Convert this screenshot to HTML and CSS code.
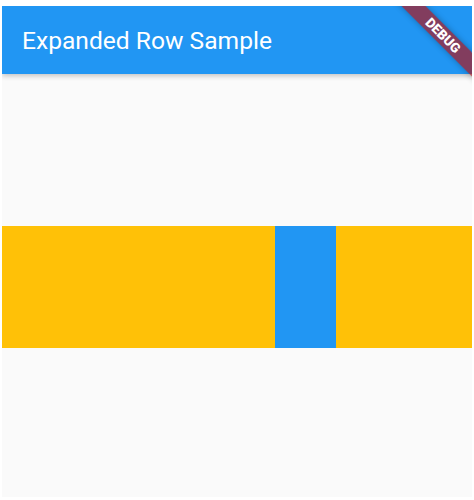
FILE: index.html
```html
<!DOCTYPE html>
<html>
<head>
<meta charset="utf-8">
<link rel="stylesheet" href="styles.css">
</head>
<body>
<div class="frame">
  <div class="app">
    <header class="appbar">
      <h1 class="title">Expanded Row Sample</h1>
    </header>
    <main class="content">
      <div class="row">
        <div class="cell amber grow2"></div>
        <div class="cell blue fixed"></div>
        <div class="cell amber grow1"></div>
      </div>
    </main>
    <div class="banner">
      <div class="ribbon">DEBUG</div>
    </div>
  </div>
</div>
</body>
</html>
```
FILE: styles.css
```css
html, body {
  margin: 0;
  padding: 0;
  background: #ffffff;
}
.frame {
  padding: 6px 2px 3px 2px;
}
.app {
  position: relative;
  width: 470px;
  height: 491px;
  background: #fafafa;
  display: flex;
  flex-direction: column;
  overflow: hidden;
  font-family: Roboto, "Liberation Sans", sans-serif;
}
.appbar {
  height: 68px;
  flex: 0 0 68px;
  background: #2196f3;
  display: flex;
  align-items: center;
  padding-left: 20px;
  box-shadow: 0 2px 5px rgba(0, 0, 0, 0.22);
  position: relative;
  z-index: 1;
}
.title {
  margin: 0;
  color: #ffffff;
  font-size: 24.6px;
  font-weight: 400;
  line-height: 1;
  padding-top: 2px;
}
.content {
  flex: 1;
  display: flex;
  align-items: center;
  padding-top: 3px;
}
.row {
  display: flex;
  width: 100%;
  height: 122px;
}
.amber {
  background: #ffc107;
}
.blue {
  background: #2196f3;
}
.grow2 {
  flex: 2;
}
.grow1 {
  flex: 1;
}
.fixed {
  flex: 0 0 61px;
}
.banner {
  position: absolute;
  top: 0;
  right: 0;
  width: 100px;
  height: 100px;
  overflow: hidden;
  pointer-events: none;
  z-index: 2;
}
.ribbon {
  position: absolute;
  width: 130px;
  height: 17px;
  left: 5.7px;
  top: 20.8px;
  transform: rotate(45deg);
  background: rgba(168, 26, 36, 0.72);
  box-shadow: 0 0 6px rgba(0, 0, 0, 0.3);
  color: #ffffff;
  font-family: Roboto, "Liberation Sans", sans-serif;
  font-size: 13.5px;
  font-weight: 900;
  line-height: 17px;
  text-align: center;
}
```
